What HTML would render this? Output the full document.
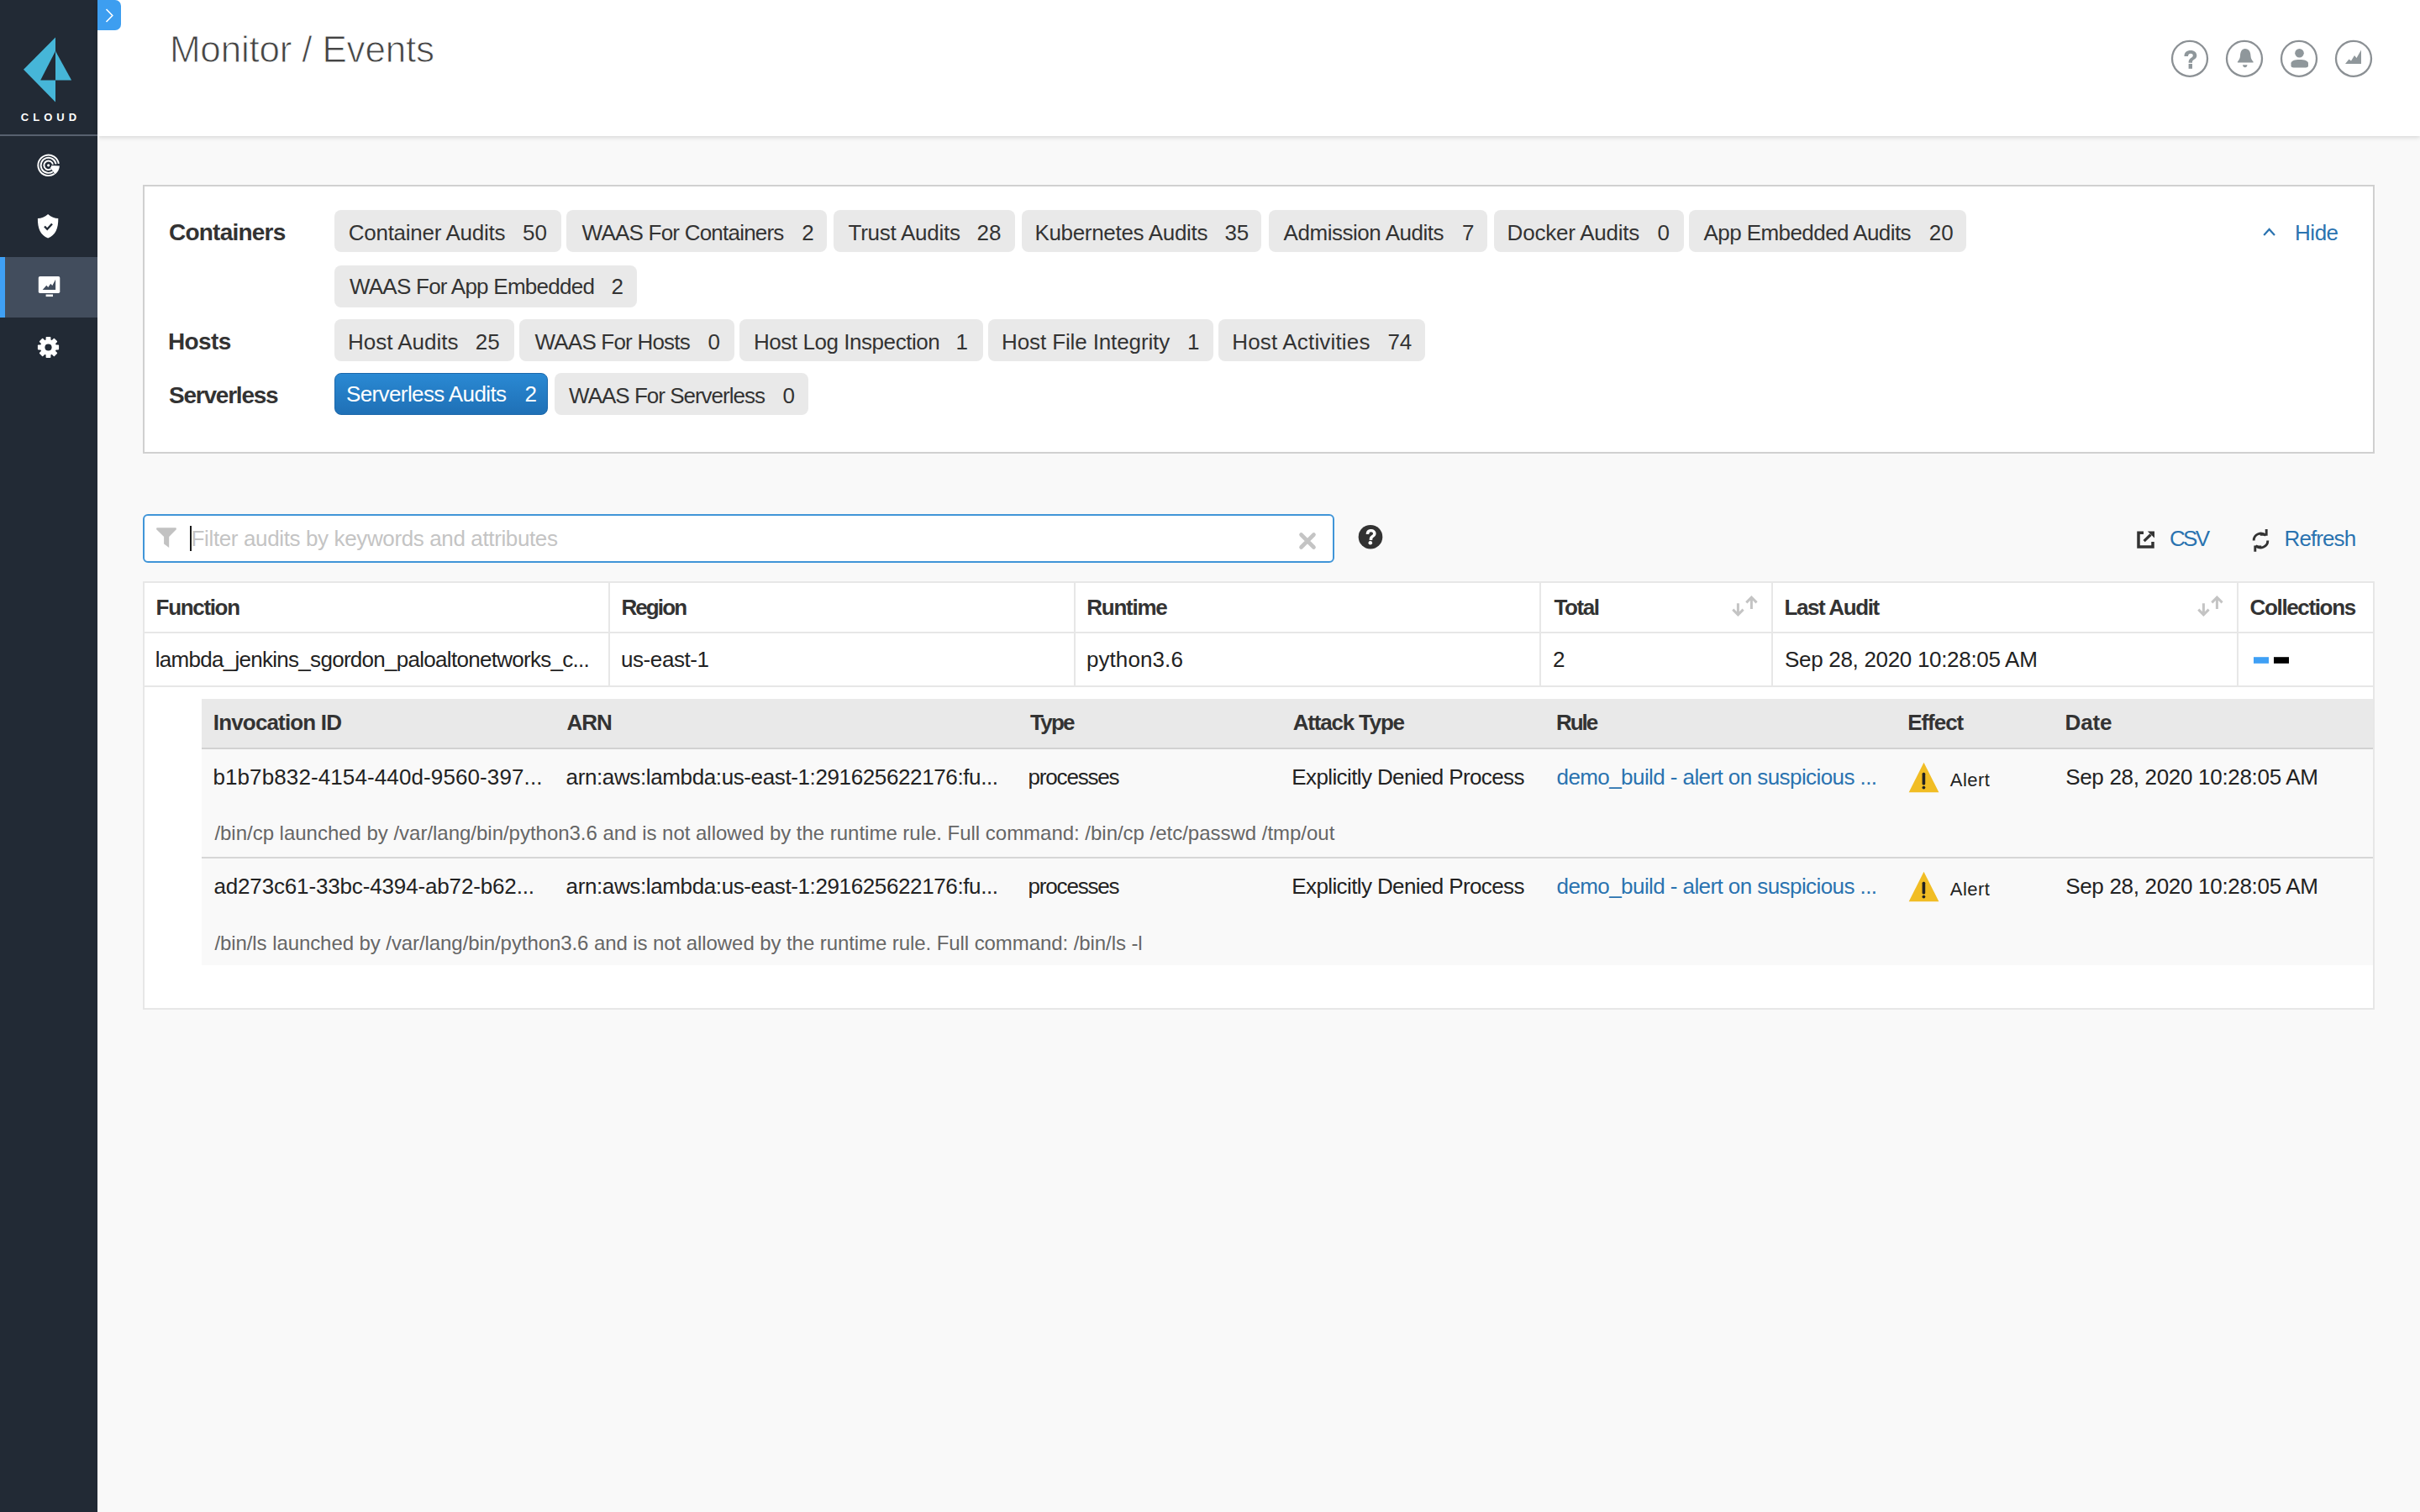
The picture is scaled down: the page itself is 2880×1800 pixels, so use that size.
<!DOCTYPE html>
<html><head><meta charset="utf-8"><title>Monitor / Events</title>
<style>
*{margin:0;padding:0;box-sizing:border-box}
html,body{width:2880px;height:1800px;overflow:hidden;background:#f9f9f9;font-family:"Liberation Sans",sans-serif}
.a{position:absolute}
.t{position:absolute;white-space:nowrap;font-family:"Liberation Sans",sans-serif}
svg{position:absolute;overflow:visible}
</style></head>
<body>
<!-- sidebar -->
<div class=a style="left:0;top:0;width:116px;height:1800px;background:#222a35"></div>
<div class=a style="left:0;top:160px;width:116px;height:2px;background:#58616f"></div>
<div class=a style="left:0;top:306px;width:116px;height:72px;background:#424d5d"></div>
<div class=a style="left:0;top:306px;width:6px;height:72px;background:#3fa0f5"></div>
<svg style="left:0;top:0" width="116" height="460" viewBox="0 0 116 460">
  <polygon points="66,44.6 28,82.7 66,121.4" fill="#46b6d8"/>
  <polygon points="66,60.7 48.2,95.4 66,95.4" fill="#222a35"/>
  <polygon points="66,60.7 85.1,95.6 66,95.6" fill="#46b6d8"/>
  <!-- radar -->
  <path d="M64.71,206.88 A12.3,12.3 0 1 1 69.81,194.88 M62.85,204.21 A9.05,9.05 0 1 1 66.60,195.38 M60.70,201.14 A5.3,5.3 0 1 1 62.89,195.97" fill="none" stroke="#fff" stroke-width="1.95"/>
  <path d="M61.26,196.99 L70.89,197.49 A13.25,13.25 0 0 1 65.63,207.38 L59.83,199.68 A3.6,3.6 0 0 0 61.26,196.99 Z" fill="#fff"/>
  <circle cx="57.66" cy="196.8" r="1.6" fill="#fff"/>
  <!-- shield -->
  <path d="M57.1,255 C61,258.5 65,259.8 69.3,260 C69.5,272 66,280 57.1,283.6 C48.2,280 44.7,272 44.9,260 C49.2,259.8 53.2,258.5 57.1,255 Z" fill="#fff"/>
  <path d="M53,269.5 L56.2,272.8 L62,266.5" fill="none" stroke="#222a35" stroke-width="2.4"/>
  <!-- monitor -->
  <rect x="45.8" y="328.9" width="25.5" height="20.1" rx="1.8" fill="#fff"/>
  <path d="M50.7,345 L55.3,339.8 L57.3,342 L60.2,337.8 L62.3,340 L66.1,332.7 L66.1,345 Z" fill="#424d5d"/>
  <rect x="54.6" y="350.5" width="8.4" height="2.6" fill="#fff"/>
  <!-- gear -->
  <g transform="translate(57.5,413.5)" fill="#fff">
    <circle r="9.6"/>
    <rect x="-2.9" y="-12.6" width="5.8" height="25.2" rx="0.8"/>
    <rect x="-2.9" y="-12.6" width="5.8" height="25.2" rx="0.8" transform="rotate(45)"/>
    <rect x="-2.9" y="-12.6" width="5.8" height="25.2" rx="0.8" transform="rotate(90)"/>
    <rect x="-2.9" y="-12.6" width="5.8" height="25.2" rx="0.8" transform="rotate(135)"/>
    <circle r="4.1" fill="#222a35"/>
  </g>
</svg>

<!-- header -->
<div class=a style="left:116px;top:0;width:2764px;height:162px;background:#fff;box-shadow:0 2px 5px rgba(0,0,0,0.13)"></div>
<div class=a style="left:116px;top:162px;width:2px;height:1638px;background:#ffffff"></div>
<div class=a style="left:116px;top:0;width:28px;height:36px;background:#3d9ef0;border-radius:0 7px 7px 0"></div>
<svg style="left:0;top:0" width="2880" height="162" viewBox="0 0 2880 162">
  <path d="M126.5,11 L133.8,18.5 L126.5,26" fill="none" stroke="#fff" stroke-width="1.6"/>
  <g fill="none" stroke="#8b9094" stroke-width="2.3">
    <circle cx="2606" cy="69.8" r="21"/>
    <circle cx="2671" cy="69.8" r="21"/>
    <circle cx="2736" cy="69.8" r="21"/>
    <circle cx="2801" cy="69.8" r="21"/>
  </g>
  <g fill="#8f979b">
    <!-- question -->
    <path d="M2599.5,67 C2599.3,62.5 2602.5,60 2607,60 C2611.5,60 2614.3,62.6 2614.3,66 C2614.3,69.5 2611.5,70.5 2610,71.8 C2609,72.6 2609,73.5 2609,74.8 L2604.6,74.8 C2604.5,72.5 2605,70.8 2607,69.3 C2608.8,68 2609.8,67.4 2609.8,66 C2609.8,64.6 2608.6,63.7 2607,63.7 C2605,63.7 2604,65 2604,67 Z"/>
    <rect x="2604.6" y="76" width="4.4" height="5.8"/>
    <!-- bell -->
    <path d="M2671.7,58 C2676.6,58 2678.3,62 2678.5,66.5 C2678.7,70 2680,71.5 2681.6,73.5 L2681.6,74.5 L2662.9,74.5 L2662.9,73.5 C2664.5,71.5 2665.8,70 2666,66.5 C2666.2,62 2667.8,58 2671.7,58 Z"/>
    <path d="M2669,77.2 L2674.5,77.2 C2674.3,79 2673.2,80.3 2671.8,80.3 C2670.3,80.3 2669.2,79 2669,77.2 Z"/>
    <!-- person -->
    <circle cx="2736.5" cy="63.2" r="5.3"/>
    <path d="M2726.5,75.5 C2726.5,72.2 2731,71 2736.7,71 C2742.5,71 2747,72.2 2747,75.5 L2747,78.6 C2747,80 2745.5,80.4 2744,80.4 L2729.5,80.4 C2728,80.4 2726.5,80 2726.5,78.6 Z"/>
    <!-- chart -->
    <path d="M2791,76 L2795.5,70.5 L2798,72.5 L2802,66 L2804.5,69 L2810,59.5 L2810,76 Z"/>
  </g>
</svg>

<!-- filter panel -->
<div class=a style="left:170px;top:220px;width:2656px;height:320px;background:#fff;border:2px solid #d0d0d0"></div>
<div class=a style="left:398px;top:250px;width:270px;height:50px;border-radius:8px;background:#e9e9e9"></div>
<div class=a style="left:674px;top:250px;width:310px;height:50px;border-radius:8px;background:#e9e9e9"></div>
<div class=a style="left:992px;top:250px;width:216px;height:50px;border-radius:8px;background:#e9e9e9"></div>
<div class=a style="left:1216px;top:250px;width:285px;height:50px;border-radius:8px;background:#e9e9e9"></div>
<div class=a style="left:1510px;top:250px;width:260px;height:50px;border-radius:8px;background:#e9e9e9"></div>
<div class=a style="left:1778px;top:250px;width:226px;height:50px;border-radius:8px;background:#e9e9e9"></div>
<div class=a style="left:2010px;top:250px;width:330px;height:50px;border-radius:8px;background:#e9e9e9"></div>
<div class=a style="left:398px;top:316px;width:360px;height:50px;border-radius:8px;background:#e9e9e9"></div>
<div class=a style="left:398px;top:380px;width:214px;height:50px;border-radius:8px;background:#e9e9e9"></div>
<div class=a style="left:618px;top:380px;width:256px;height:50px;border-radius:8px;background:#e9e9e9"></div>
<div class=a style="left:880px;top:380px;width:290px;height:50px;border-radius:8px;background:#e9e9e9"></div>
<div class=a style="left:1176px;top:380px;width:268px;height:50px;border-radius:8px;background:#e9e9e9"></div>
<div class=a style="left:1450px;top:380px;width:246px;height:50px;border-radius:8px;background:#e9e9e9"></div>
<div class=a style="left:398px;top:444px;width:254px;height:50px;border-radius:8px;background:linear-gradient(#2a89d3,#1f70b6);border:1px solid #1c68ab"></div>
<div class=a style="left:660px;top:444px;width:302px;height:50px;border-radius:8px;background:#e9e9e9"></div>
<svg style="left:0;top:0" width="2880" height="300" viewBox="0 0 2880 300">
  <path d="M2694.2,280 L2700.6,273 L2707,280" fill="none" stroke="#2a73b0" stroke-width="2.2"/>
</svg>

<!-- filter bar -->
<div class=a style="left:170px;top:612px;width:1418px;height:58px;background:#fff;border:2px solid #4095d8;border-radius:6px"></div>
<div class=a style="left:226px;top:626px;width:2px;height:30px;background:#1a1a1a"></div>
<svg style="left:0;top:0" width="2880" height="700" viewBox="0 0 2880 700">
  <path d="M187,628.3 L209,628.3 Q210.3,628.5 209.8,630.2 L201.2,639 L201.2,651.9 L195.1,647.4 L195.1,639 L186.2,630.2 Q185.7,628.5 187,628.3 Z" fill="#c2c2c2"/>
  <g stroke="#c4c4c4" stroke-width="4.6" stroke-linecap="round">
    <path d="M1548.5,636.5 L1563.5,651.5 M1563.5,636.5 L1548.5,651.5"/>
  </g>
  <circle cx="1631" cy="639.2" r="14.3" fill="#333"/>
  <path d="M1625.7,636 C1625.7,632 1628,630 1631.5,630 C1635,630 1637.6,632 1637.6,635.2 C1637.6,638 1635.5,639 1634.3,640 C1633.3,640.8 1633.3,641.5 1633.3,643 L1629.7,643 C1629.6,640.5 1630,639 1631.8,637.7 C1633.3,636.6 1634,636.2 1634,635.2 C1634,634 1633,633.3 1631.6,633.3 C1630,633.3 1629.3,634.5 1629.3,636 Z" fill="#fff"/>
  <circle cx="1630.8" cy="646.3" r="2.3" fill="#fff"/>
  <!-- csv icon -->
  <path d="M2551,634.3 L2545,634.3 L2545,651 L2562,651 L2562,645" fill="none" stroke="#333" stroke-width="3.5"/>
  <path d="M2551.6,644.2 L2559.5,636.5" stroke="#333" stroke-width="3.2"/>
  <path d="M2555.8,632.4 L2564,632.4 L2564,640.6 Z" fill="#333"/>
  <!-- refresh icon -->
  <g fill="none" stroke="#333" stroke-width="2.9">
    <path d="M2682.2,643.5 A8.3,8.3 0 0 1 2696.4,637.6"/>
    <path d="M2698.8,643.5 A8.3,8.3 0 0 1 2684.6,649.4"/>
    <path d="M2697.2,630 L2697.2,636.4 L2689.8,636.4"/>
    <path d="M2683.8,656.7 L2683.8,650.9 L2691.2,650.9"/>
  </g>
</svg>

<!-- outer table -->
<div class=a style="left:170px;top:692px;width:2656px;height:510px;background:#fff;border:2px solid #e7e7e7"></div>
<div class=a style="left:172px;top:752px;width:2652px;height:2px;background:#e7e7e7"></div>
<div class=a style="left:172px;top:816px;width:2652px;height:2px;background:#e7e7e7"></div>
<div class=a style="left:723.5px;top:694px;width:2px;height:122px;background:#e7e7e7"></div>
<div class=a style="left:1277.5px;top:694px;width:2px;height:122px;background:#e7e7e7"></div>
<div class=a style="left:1832px;top:694px;width:2px;height:122px;background:#e7e7e7"></div>
<div class=a style="left:2108px;top:694px;width:2px;height:122px;background:#e7e7e7"></div>
<div class=a style="left:2662px;top:694px;width:2px;height:122px;background:#e7e7e7"></div>
<svg style="left:0;top:0" width="2880" height="800" viewBox="0 0 2880 800">
  <g fill="none" stroke="#c4c4c4" stroke-width="3">
    <path d="M2068.4,718.3 L2068.4,732 M2062.3,725.6 L2068.4,731.8 L2074.6,725.6"/>
    <path d="M2084.4,711 L2084.4,725 M2078.3,717.4 L2084.4,711.2 L2090.6,717.4"/>
    <path d="M2622.4,718.3 L2622.4,732 M2616.3,725.6 L2622.4,731.8 L2628.6,725.6"/>
    <path d="M2638.4,711 L2638.4,725 M2632.3,717.4 L2638.4,711.2 L2644.6,717.4"/>
  </g>
  <rect x="2682" y="782.2" width="18" height="7.6" fill="#3fa0f5"/>
  <rect x="2706" y="782.2" width="18" height="7.6" fill="#000"/>
</svg>

<!-- nested table -->
<div class=a style="left:240px;top:832px;width:2584px;height:58px;background:#e9e9e9"></div>
<div class=a style="left:240px;top:890px;width:2584px;height:2px;background:#d2d2d2"></div>
<div class=a style="left:240px;top:892px;width:2584px;height:257px;background:#f9f9f9"></div>
<div class=a style="left:240px;top:1019.5px;width:2584px;height:2px;background:#d6d6d6"></div>
<svg style="left:0;top:0" width="2880" height="1100" viewBox="0 0 2880 1100">
  <g id="warn">
    <polygon points="2289.5,907.8 2271.7,943.3 2307.4,943.3" fill="#f1bd24"/>
    <rect x="2287.6" y="919.8" width="3.6" height="14.8" rx="1.5" fill="#222"/>
    <circle cx="2289.4" cy="937.6" r="1.9" fill="#222"/>
  </g>
  <use href="#warn" transform="translate(0,130)"/>
</svg>
<div class=t style="left:201.9px;top:37.0px;font-size:44px;line-height:44px;font-weight:400;color:#444;letter-spacing:-0.187px;-webkit-text-stroke:0.9px #fff;paint-order:fill stroke">Monitor / Events</div>
<div class=t style="left:24.8px;top:133.0px;font-size:13px;line-height:13px;font-weight:700;color:#ffffff;letter-spacing:5.025px;">CLOUD</div>
<div class=t style="left:201.0px;top:262.5px;font-size:28px;line-height:28px;font-weight:700;color:#333;letter-spacing:-0.778px;">Containers</div>
<div class=t style="left:200.0px;top:393.0px;font-size:28px;line-height:28px;font-weight:700;color:#333;letter-spacing:-0.625px;">Hosts</div>
<div class=t style="left:201.0px;top:457.0px;font-size:28px;line-height:28px;font-weight:700;color:#333;letter-spacing:-1.222px;">Serverless</div>
<div class=t style="left:414.8px;top:264.0px;font-size:26px;line-height:26px;font-weight:400;color:#333;letter-spacing:-0.280px;">Container Audits</div>
<div class=t style="left:622.1px;top:264.0px;font-size:26px;line-height:26px;font-weight:400;color:#333;letter-spacing:0.000px;">50</div>
<div class=t style="left:692.6px;top:264.0px;font-size:26px;line-height:26px;font-weight:400;color:#333;letter-spacing:-0.778px;">WAAS For Containers</div>
<div class=t style="left:954.3px;top:264.0px;font-size:26px;line-height:26px;font-weight:400;color:#333;letter-spacing:0.000px;">2</div>
<div class=t style="left:1009.6px;top:264.0px;font-size:26px;line-height:26px;font-weight:400;color:#333;letter-spacing:-0.273px;">Trust Audits</div>
<div class=t style="left:1162.5px;top:264.0px;font-size:26px;line-height:26px;font-weight:400;color:#333;letter-spacing:0.000px;">28</div>
<div class=t style="left:1231.4px;top:264.0px;font-size:26px;line-height:26px;font-weight:400;color:#333;letter-spacing:-0.312px;">Kubernetes Audits</div>
<div class=t style="left:1457.4px;top:264.0px;font-size:26px;line-height:26px;font-weight:400;color:#333;letter-spacing:0.000px;">35</div>
<div class=t style="left:1527.6px;top:264.0px;font-size:26px;line-height:26px;font-weight:400;color:#333;letter-spacing:-0.467px;">Admission Audits</div>
<div class=t style="left:1739.9px;top:264.0px;font-size:26px;line-height:26px;font-weight:400;color:#333;letter-spacing:0.000px;">7</div>
<div class=t style="left:1793.6px;top:264.0px;font-size:26px;line-height:26px;font-weight:400;color:#333;letter-spacing:-0.225px;">Docker Audits</div>
<div class=t style="left:1972.5px;top:264.0px;font-size:26px;line-height:26px;font-weight:400;color:#333;letter-spacing:0.000px;">0</div>
<div class=t style="left:2027.5px;top:264.0px;font-size:26px;line-height:26px;font-weight:400;color:#333;letter-spacing:-0.567px;">App Embedded Audits</div>
<div class=t style="left:2295.7px;top:264.0px;font-size:26px;line-height:26px;font-weight:400;color:#333;letter-spacing:0.000px;">20</div>
<div class=t style="left:415.9px;top:328.0px;font-size:26px;line-height:26px;font-weight:400;color:#333;letter-spacing:-0.745px;">WAAS For App Embedded</div>
<div class=t style="left:727.5px;top:328.0px;font-size:26px;line-height:26px;font-weight:400;color:#333;letter-spacing:0.000px;">2</div>
<div class=t style="left:413.9px;top:393.5px;font-size:26px;line-height:26px;font-weight:400;color:#333;letter-spacing:0.020px;">Host Audits</div>
<div class=t style="left:565.7px;top:393.5px;font-size:26px;line-height:26px;font-weight:400;color:#333;letter-spacing:0.000px;">25</div>
<div class=t style="left:636.5px;top:393.5px;font-size:26px;line-height:26px;font-weight:400;color:#333;letter-spacing:-0.792px;">WAAS For Hosts</div>
<div class=t style="left:842.5px;top:393.5px;font-size:26px;line-height:26px;font-weight:400;color:#333;letter-spacing:0.000px;">0</div>
<div class=t style="left:896.9px;top:393.5px;font-size:26px;line-height:26px;font-weight:400;color:#333;letter-spacing:-0.439px;">Host Log Inspection</div>
<div class=t style="left:1137.5px;top:393.5px;font-size:26px;line-height:26px;font-weight:400;color:#333;letter-spacing:0.000px;">1</div>
<div class=t style="left:1192.1px;top:393.5px;font-size:26px;line-height:26px;font-weight:400;color:#333;letter-spacing:-0.122px;">Host File Integrity</div>
<div class=t style="left:1413.0px;top:393.5px;font-size:26px;line-height:26px;font-weight:400;color:#333;letter-spacing:0.000px;">1</div>
<div class=t style="left:1466.3px;top:393.5px;font-size:26px;line-height:26px;font-weight:400;color:#333;letter-spacing:0.164px;">Host Activities</div>
<div class=t style="left:1651.4px;top:393.5px;font-size:26px;line-height:26px;font-weight:400;color:#333;letter-spacing:0.000px;">74</div>
<div class=t style="left:412.0px;top:455.5px;font-size:26px;line-height:26px;font-weight:400;color:#fff;letter-spacing:-0.612px;">Serverless Audits</div>
<div class=t style="left:624.5px;top:455.5px;font-size:26px;line-height:26px;font-weight:400;color:#fff;letter-spacing:0.000px;">2</div>
<div class=t style="left:677.1px;top:458.0px;font-size:26px;line-height:26px;font-weight:400;color:#333;letter-spacing:-1.000px;">WAAS For Serverless</div>
<div class=t style="left:931.4px;top:458.0px;font-size:26px;line-height:26px;font-weight:400;color:#333;letter-spacing:0.000px;">0</div>
<div class=t style="left:2731.1px;top:264.0px;font-size:26px;line-height:26px;font-weight:400;color:#2a73b0;letter-spacing:-0.500px;">Hide</div>
<div class=t style="left:227.6px;top:627.6px;font-size:26px;line-height:26px;font-weight:400;color:#c4c4c4;letter-spacing:-0.372px;">Filter audits by keywords and attributes</div>
<div class=t style="left:2582.1px;top:628.0px;font-size:26px;line-height:26px;font-weight:400;color:#2a73b0;letter-spacing:-2.750px;">CSV</div>
<div class=t style="left:2718.6px;top:628.0px;font-size:26px;line-height:26px;font-weight:400;color:#2a73b0;letter-spacing:-0.917px;">Refresh</div>
<div class=t style="left:185.6px;top:710.2px;font-size:26px;line-height:26px;font-weight:700;color:#333;letter-spacing:-1.329px;">Function</div>
<div class=t style="left:739.4px;top:710.2px;font-size:26px;line-height:26px;font-weight:700;color:#333;letter-spacing:-1.880px;">Region</div>
<div class=t style="left:1293.3px;top:710.2px;font-size:26px;line-height:26px;font-weight:700;color:#333;letter-spacing:-1.267px;">Runtime</div>
<div class=t style="left:1849.5px;top:710.2px;font-size:26px;line-height:26px;font-weight:700;color:#333;letter-spacing:-1.400px;">Total</div>
<div class=t style="left:2123.4px;top:710.2px;font-size:26px;line-height:26px;font-weight:700;color:#333;letter-spacing:-1.367px;">Last Audit</div>
<div class=t style="left:2677.6px;top:710.2px;font-size:26px;line-height:26px;font-weight:700;color:#333;letter-spacing:-1.360px;">Collections</div>
<div class=t style="left:184.7px;top:772.0px;font-size:26px;line-height:26px;font-weight:400;color:#222;letter-spacing:-0.714px;">lambda_jenkins_sgordon_paloaltonetworks_c...</div>
<div class=t style="left:739.0px;top:772.0px;font-size:26px;line-height:26px;font-weight:400;color:#222;letter-spacing:-0.425px;">us-east-1</div>
<div class=t style="left:1292.9px;top:772.0px;font-size:26px;line-height:26px;font-weight:400;color:#222;letter-spacing:0.100px;">python3.6</div>
<div class=t style="left:1848.1px;top:772.0px;font-size:26px;line-height:26px;font-weight:400;color:#222;letter-spacing:0.000px;">2</div>
<div class=t style="left:2124.0px;top:772.0px;font-size:26px;line-height:26px;font-weight:400;color:#222;letter-spacing:-0.309px;">Sep 28, 2020 10:28:05 AM</div>
<div class=t style="left:253.8px;top:847.3px;font-size:26px;line-height:26px;font-weight:700;color:#333;letter-spacing:-0.842px;">Invocation ID</div>
<div class=t style="left:674.4px;top:847.3px;font-size:26px;line-height:26px;font-weight:700;color:#333;letter-spacing:-0.950px;">ARN</div>
<div class=t style="left:1226.0px;top:847.3px;font-size:26px;line-height:26px;font-weight:700;color:#333;letter-spacing:-1.767px;">Type</div>
<div class=t style="left:1538.7px;top:847.3px;font-size:26px;line-height:26px;font-weight:700;color:#333;letter-spacing:-1.210px;">Attack Type</div>
<div class=t style="left:1851.9px;top:847.3px;font-size:26px;line-height:26px;font-weight:700;color:#333;letter-spacing:-1.967px;">Rule</div>
<div class=t style="left:2270.2px;top:847.3px;font-size:26px;line-height:26px;font-weight:700;color:#333;letter-spacing:-1.040px;">Effect</div>
<div class=t style="left:2457.6px;top:847.3px;font-size:26px;line-height:26px;font-weight:700;color:#333;letter-spacing:-0.200px;">Date</div>
<div class=t style="left:253.4px;top:912.0px;font-size:26px;line-height:26px;font-weight:400;color:#222;letter-spacing:0.110px;">b1b7b832-4154-440d-9560-397...</div>
<div class=t style="left:673.6px;top:912.0px;font-size:26px;line-height:26px;font-weight:400;color:#222;letter-spacing:-0.381px;">arn:aws:lambda:us-east-1:291625622176:fu...</div>
<div class=t style="left:1223.6px;top:912.0px;font-size:26px;line-height:26px;font-weight:400;color:#222;letter-spacing:-1.188px;">processes</div>
<div class=t style="left:1537.3px;top:912.0px;font-size:26px;line-height:26px;font-weight:400;color:#222;letter-spacing:-0.613px;">Explicitly Denied Process</div>
<div class=t style="left:1852.5px;top:912.0px;font-size:26px;line-height:26px;font-weight:400;color:#2a73b0;letter-spacing:-0.577px;">demo_build - alert on suspicious ...</div>
<div class=t style="left:2320.8px;top:918.0px;font-size:22px;line-height:22px;font-weight:400;color:#222;letter-spacing:0.450px;">Alert</div>
<div class=t style="left:2458.2px;top:912.0px;font-size:26px;line-height:26px;font-weight:400;color:#222;letter-spacing:-0.309px;">Sep 28, 2020 10:28:05 AM</div>
<div class=t style="left:255.4px;top:980.0px;font-size:24px;line-height:24px;font-weight:400;color:#666;letter-spacing:-0.020px;">/bin/cp launched by /var/lang/bin/python3.6 and is not allowed by the runtime rule. Full command: /bin/cp /etc/passwd /tmp/out</div>
<div class=t style="left:254.4px;top:1042.0px;font-size:26px;line-height:26px;font-weight:400;color:#222;letter-spacing:-0.148px;">ad273c61-33bc-4394-ab72-b62...</div>
<div class=t style="left:673.6px;top:1042.0px;font-size:26px;line-height:26px;font-weight:400;color:#222;letter-spacing:-0.381px;">arn:aws:lambda:us-east-1:291625622176:fu...</div>
<div class=t style="left:1223.6px;top:1042.0px;font-size:26px;line-height:26px;font-weight:400;color:#222;letter-spacing:-1.188px;">processes</div>
<div class=t style="left:1537.3px;top:1042.0px;font-size:26px;line-height:26px;font-weight:400;color:#222;letter-spacing:-0.613px;">Explicitly Denied Process</div>
<div class=t style="left:1852.5px;top:1042.0px;font-size:26px;line-height:26px;font-weight:400;color:#2a73b0;letter-spacing:-0.577px;">demo_build - alert on suspicious ...</div>
<div class=t style="left:2320.8px;top:1048.0px;font-size:22px;line-height:22px;font-weight:400;color:#222;letter-spacing:0.450px;">Alert</div>
<div class=t style="left:2458.2px;top:1042.0px;font-size:26px;line-height:26px;font-weight:400;color:#222;letter-spacing:-0.309px;">Sep 28, 2020 10:28:05 AM</div>
<div class=t style="left:255.4px;top:1110.5px;font-size:24px;line-height:24px;font-weight:400;color:#666;letter-spacing:-0.078px;">/bin/ls launched by /var/lang/bin/python3.6 and is not allowed by the runtime rule. Full command: /bin/ls -l</div>
</body></html>
